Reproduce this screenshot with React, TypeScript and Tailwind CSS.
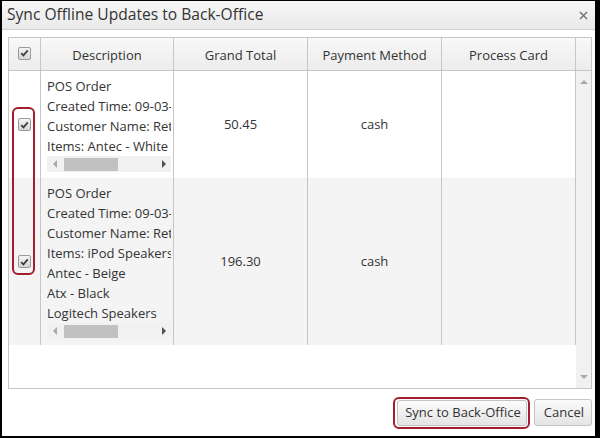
import React from 'react';

const font = { fontFamily: '"Open Sans", "Noto Sans", Arial, sans-serif' };

const Check = () => (
  <div className="w-[13px] h-[13px] rounded-[2px] border border-[#9a9a9a] bg-gradient-to-b from-[#f4f4f4] to-[#d6d6d6] flex items-center justify-center">
    <svg width="9" height="8" viewBox="0 0 9 8">
      <path d="M1.2 4.2 L3.4 6.4 L7.8 1.4" fill="none" stroke="#404040" strokeWidth="1.8" />
    </svg>
  </div>
);

const HScroll = () => (
  <div className="h-4 bg-[#f1f1f1] flex items-center">
    <svg width="5" height="8" viewBox="0 0 5 8" className="ml-[5px]">
      <polygon points="5,0 5,8 1,4" fill="#a8a8a8" />
    </svg>
    <div className="ml-[7px] w-[54px] h-[13px] bg-[#c1c1c1]" />
    <svg width="5" height="8" viewBox="0 0 5 8" className="ml-auto mr-[4px]">
      <polygon points="0,0 0,8 4,4" fill="#505050" />
    </svg>
  </div>
);

interface Order {
  lines: string[];
  total: string;
  method: string;
  shaded: boolean;
  height: string;
}

const orders: Order[] = [
  {
    lines: ['POS Order', 'Created Time: 09-03-2015 10:42:18', 'Customer Name: Retail Customer', 'Items: Antec - White'],
    total: '50.45',
    method: 'cash',
    shaded: false,
    height: 'h-[107px]',
  },
  {
    lines: [
      'POS Order',
      'Created Time: 09-03-2015 10:44:02',
      'Customer Name: Retail Customer',
      'Items: iPod Speakers,',
      'Antec - Beige',
      'Atx - Black',
      'Logitech Speakers',
    ],
    total: '196.30',
    method: 'cash',
    shaded: true,
    height: 'h-[167px]',
  },
];

export default function App() {
  return (
    <div className="w-[600px] h-[438px] bg-black pt-[1px] pl-[2px] pr-[5px] pb-[2px]" style={font}>
      <div className="relative h-full bg-white flex flex-col text-[#333]">
        {/* Title bar */}
        <div className="h-[29px] shrink-0 flex items-center justify-between pl-[5px] pr-[7px] bg-gradient-to-b from-[#f7f7f7] to-[#e9e9e9] border-b border-[#d2d2d2]">
          <span className="text-[15.6px] leading-none pb-[1px]">Sync Offline Updates to Back-Office</span>
          <svg width="9" height="9" viewBox="0 0 9 9">
            <path d="M1 1 L8 8 M8 1 L1 8" stroke="#7a7a7a" strokeWidth="1.6" />
          </svg>
        </div>

        {/* Grid */}
        <div className="mt-[7px] ml-[6px] mr-[3px] h-[352px] border border-[#c6c6c6] flex flex-col text-[13px]">
          <div className="h-[33px] shrink-0 flex border-b border-[#c6c6c6] bg-gradient-to-b from-[#f8f8f8] to-[#ececec]">
            <div className="w-[32px] border-r border-[#c6c6c6] flex items-center justify-center pb-[2px]">
              <Check />
            </div>
            <div className="w-[133px] border-r border-[#c6c6c6] flex items-center justify-center pt-[3px]">Description</div>
            <div className="w-[134px] border-r border-[#c6c6c6] flex items-center justify-center pt-[3px]">Grand Total</div>
            <div className="w-[134px] border-r border-[#c6c6c6] flex items-center justify-center pt-[3px]">Payment Method</div>
            <div className="w-[134px] border-r border-[#c6c6c6] flex items-center justify-center pt-[3px]">Process Card</div>
            <div className="flex-1" />
          </div>

          <div className="flex-1 flex min-h-0">
            <div className="w-[567px] flex flex-col">
              {orders.map((o, i) => (
                <div key={i} className={`${o.height} flex ${o.shaded ? 'bg-[#f4f4f4]' : 'bg-white'}`}>
                  <div className="w-[32px] border-r border-[#c6c6c6] flex items-center justify-center">
                    <Check />
                  </div>
                  <div className="w-[133px] border-r border-[#c6c6c6] pl-[6px] pr-[2px] pt-[5px]">
                    <div className="overflow-hidden whitespace-nowrap leading-[20px]">
                      {o.lines.map((l, j) => (
                        <div key={j}>{l}</div>
                      ))}
                    </div>
                    <HScroll />
                  </div>
                  <div className="w-[134px] border-r border-[#c6c6c6] flex items-center justify-center">{o.total}</div>
                  <div className="w-[134px] border-r border-[#c6c6c6] flex items-center justify-center">{o.method}</div>
                  <div className="w-[134px] border-r border-[#c6c6c6]" />
                </div>
              ))}
            </div>
            <div className="flex-1 bg-[#f1f1f1] flex flex-col items-center justify-between py-[8px]">
              <svg width="8" height="5" viewBox="0 0 8 5">
                <polygon points="0,5 8,5 4,1" fill="#a8a8a8" />
              </svg>
              <svg width="8" height="5" viewBox="0 0 8 5">
                <polygon points="0,0 8,0 4,4" fill="#a8a8a8" />
              </svg>
            </div>
          </div>
        </div>

        {/* Footer */}
        <div className="mt-[10px] mr-[3px] flex justify-end gap-[7px] text-[13px]">
          <span className="relative">
            <button
              type="button"
              className="h-[26px] pl-[7px] pr-[5px] rounded-[3px] border border-[#c4c4c4] bg-gradient-to-b from-[#fbfbfb] to-[#e4e4e4] text-[#333] mt-[1px]"
            >
              Sync to Back-Office
            </button>
            <span className="absolute -left-[4px] -right-[3px] -top-[2px] -bottom-[3px] border-2 border-[#a31d2c] rounded-[6px]" />
          </span>
          <button
            type="button"
            className="h-[27px] pl-[9px] pr-[7px] rounded-[3px] border border-[#c4c4c4] bg-gradient-to-b from-[#fbfbfb] to-[#e4e4e4] text-[#333]"
          >
            Cancel
          </button>
        </div>

        {/* annotation around row checkboxes */}
        <div className="absolute left-[10px] top-[106px] w-[23px] h-[168px] border-2 border-[#a31d2c] rounded-[6px]" />
      </div>
    </div>
  );
}
